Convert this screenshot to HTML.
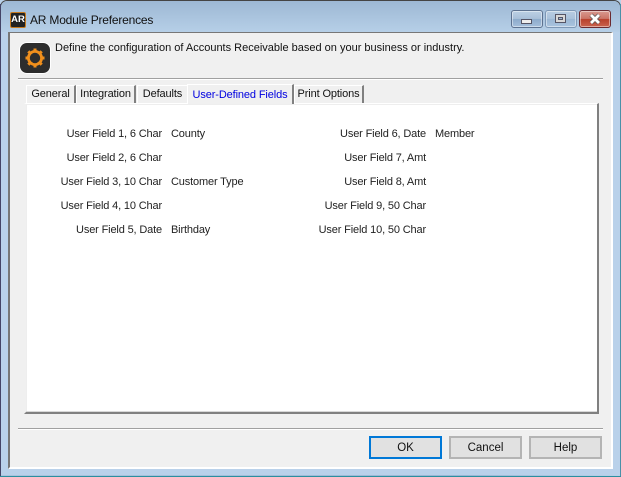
<!DOCTYPE html>
<html><head><meta charset="utf-8"><style>
html,body{margin:0;padding:0}
body{width:621px;height:477px;overflow:hidden;position:relative;background:#b9d1e9;font:11px "Liberation Sans",sans-serif;color:#111}
div{position:absolute;box-sizing:border-box}
.t{white-space:nowrap;line-height:14px;height:14px}
.f{letter-spacing:-.15px;color:#222}
.r{text-align:right}
.tab{top:85px;height:18px;background:#f0f0f0;border-top:1px solid #fff;border-left:1px solid #fff;border-right:2px solid #808080;line-height:17px;text-align:center;white-space:nowrap;letter-spacing:-.12px}
.b{top:436px;width:73px;height:23px;background:#e1e1e1;border:2px solid #b4b4b4;text-align:center;line-height:20px;font-size:11.5px}
.wb{top:10px;height:18px;border-radius:3px;border:1px solid #5d7290;box-shadow:inset 0 0 0 1px rgba(255,255,255,.45)}
</style></head><body>
<div style="left:0;top:0;width:621px;height:477px;border-radius:7px 7px 0 0;background:linear-gradient(90deg,#a9c3dd 0,#a2bdd9 40%,#98b5d3 75%,#b7d0e8 100%);border:1px solid #444;border-bottom:0"></div>
<div style="left:1px;top:1px;width:619px;height:31px;border-radius:6px 6px 0 0;background:linear-gradient(180deg,#9db8d4,#b6cfe7)"></div>
<div style="left:1px;top:32px;width:619px;height:443px;background:#b9d1ea"></div>
<div style="left:0;top:476px;width:621px;height:1px;background:#2a8fa0"></div>
<div style="left:0;top:4px;width:1px;height:472px;background:#446"></div>
<div style="left:620px;top:4px;width:1px;height:472px;background:#4a90a8"></div>

<div style="left:10px;top:12px;width:16px;height:16px;background:#222;border:1px solid #c77a1e;border-radius:2px;color:#fff;font-weight:bold;font-size:9.5px;line-height:14px;text-align:center">AR</div>
<div class="t" style="left:30px;top:13px;font-size:12px;letter-spacing:-.2px;color:#111">AR Module Preferences</div>

<div class="wb" style="left:511px;width:32px;background:linear-gradient(180deg,#bcd0e4 0,#a9c0d9 48%,#8dabcb 52%,#a5bfdc 100%)"></div>
<div style="left:521px;top:19px;width:11px;height:5px;background:#eee;border:1px solid #556"></div>
<div class="wb" style="left:545px;width:32px;border-color:#7d97b5;background:linear-gradient(180deg,#b8cde2 0,#aac2db 48%,#9bb7d4 52%,#aac4df 100%)"></div>
<div style="left:555px;top:14px;width:11px;height:9px;background:#d8d8d8;border:1px solid #556"></div>
<div style="left:558px;top:17px;width:5px;height:3px;background:#9db8d4;border:1px solid #556"></div>
<div class="wb" style="left:579px;width:32px;border-color:#6b2a30;background:linear-gradient(180deg,#d99a90 0,#cb7466 48%,#b8402c 52%,#c9634f 100%)"></div>
<svg style="position:absolute;left:588px;top:13px" width="14" height="12"><path d="M3 2L11 10M11 2L3 10" stroke="#555" stroke-width="4.2"/><path d="M3 2L11 10M11 2L3 10" stroke="#fff" stroke-width="2.8"/></svg>

<div style="left:8px;top:32px;width:605px;height:437px;background:#f0f0f0;border-top:1px solid #777;border-left:2px solid #777;border-right:2px solid #fff;border-bottom:2px solid #fff"></div>

<div style="left:20px;top:43px;width:30px;height:30px;background:#2d2d2d;border-radius:7px;box-shadow:0 0 0 1px #fff"></div>
<svg style="position:absolute;left:24px;top:47px" width="22" height="22" viewBox="0 0 22 22"><circle cx="11" cy="11" r="6.6" fill="none" stroke="#f08f1c" stroke-width="2.8"/><g stroke="#f08f1c" stroke-width="3"><path d="M11 1.5V4M11 18V20.5M1.5 11H4M18 11H20.5M4.3 4.3L6 6M16 16L17.7 17.7M17.7 4.3L16 6M6 16L4.3 17.7"/></g></svg>
<div class="t" style="left:55px;top:41px">Define the configuration of Accounts Receivable based on your business or industry.</div>
<div style="left:18px;top:78px;width:585px;height:1px;background:#a0a0a0"></div>
<div style="left:18px;top:79px;width:585px;height:1px;background:#fff"></div>

<div style="left:24px;top:103px;width:575px;height:311px;background:#fff;border:2px solid #f0f0f0;border-top:1px solid #fff;border-right:2px solid #808080;border-bottom:2px solid #808080;box-shadow:inset 1px 1px 0 #eee"></div>
<div style="left:26px;top:411px;width:571px;height:1px;background:#d8d8d8"></div>

<div class="tab" style="left:26px;width:50px">General</div>
<div class="tab" style="left:76px;width:60px">Integration</div>
<div class="tab" style="left:137px;width:50px;border-right:0">Defaults</div>
<div class="tab" style="left:187px;width:107px;top:84px;height:20px;border-right:2px solid #808080;color:#0000e0;background:#f0f0f0;line-height:20px">User-Defined Fields</div>
<div class="tab" style="left:294px;width:70px">Print Options</div>

<div class="t r f" style="left:30px;width:132px;top:127px">User Field 1, 6 Char</div>
<div class="t r f" style="left:30px;width:132px;top:151px">User Field 2, 6 Char</div>
<div class="t r f" style="left:30px;width:132px;top:175px">User Field 3, 10 Char</div>
<div class="t r f" style="left:30px;width:132px;top:199px">User Field 4, 10 Char</div>
<div class="t r f" style="left:30px;width:132px;top:223px">User Field 5, Date</div>
<div class="t f" style="left:171px;top:127px">County</div>
<div class="t f" style="left:171px;top:175px">Customer Type</div>
<div class="t f" style="left:171px;top:223px">Birthday</div>

<div class="t r f" style="left:290px;width:136px;top:127px">User Field 6, Date</div>
<div class="t r f" style="left:290px;width:136px;top:151px">User Field 7, Amt</div>
<div class="t r f" style="left:290px;width:136px;top:175px">User Field 8, Amt</div>
<div class="t r f" style="left:290px;width:136px;top:199px">User Field 9, 50 Char</div>
<div class="t r f" style="left:290px;width:136px;top:223px">User Field 10, 50 Char</div>
<div class="t f" style="left:435px;top:127px">Member</div>

<div style="left:18px;top:428px;width:585px;height:1px;background:#a0a0a0"></div>
<div style="left:18px;top:429px;width:585px;height:1px;background:#fff"></div>
<div class="b" style="left:369px;border-color:#0078d7">OK</div>
<div class="b" style="left:449px">Cancel</div>
<div class="b" style="left:529px">Help</div>
</body></html>
